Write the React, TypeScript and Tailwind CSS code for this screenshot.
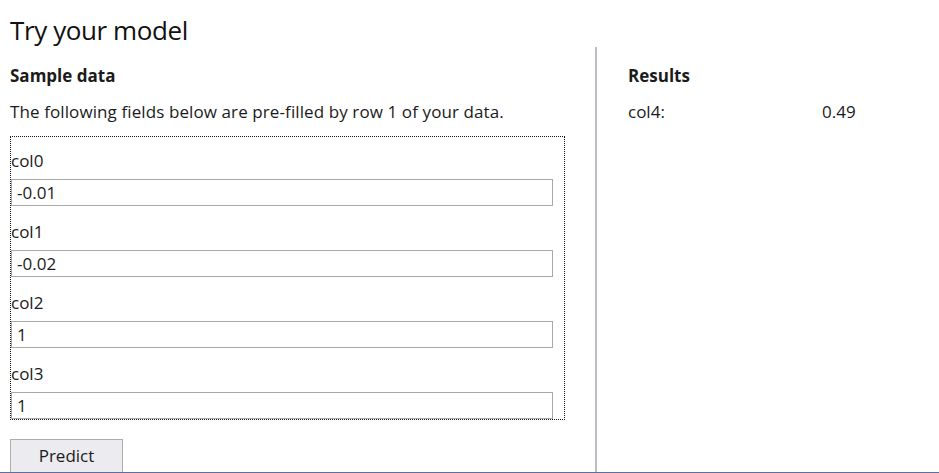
const fields = [
  { name: "col0", value: "-0.01" },
  { name: "col1", value: "-0.02" },
  { name: "col2", value: "1" },
  { name: "col3", value: "1" },
];

export default function App() {
  return (
    <div className="relative h-[473px] w-[939px] overflow-hidden bg-white text-[#1b1b1b] [font-family:'Open_Sans',sans-serif]">
      <h1 className="absolute left-[10px] top-[13px] text-[26px] leading-[34px] tracking-[-0.4px] font-normal text-[#111]">
        Try your model
      </h1>
      <div className="flex pt-[47px] h-[472px]">
        <section className="w-[595px] pl-[10px] pt-[18px] overflow-hidden">
          <h2 className="text-[17px] leading-[22px] font-bold">Sample data</h2>
          <p className="mt-[14px] text-[17px] leading-[22px] tracking-[0.1px]">
            The following fields below are pre-filled by row 1 of your data.
          </p>
          <div className="mt-[13px] w-[555px] border border-dotted border-[#111] pt-[13px]">
            {fields.map((f, i) => (
              <div key={f.name} className={i < fields.length - 1 ? "mb-[15px]" : ""}>
                <label className="block text-[17px] leading-[22px]">{f.name}</label>
                <input
                  readOnly
                  value={f.value}
                  className="mt-[7px] block h-[27px] w-[542px] border border-[#a9a9a9] px-[5px] text-[17px] leading-[22px] text-[#1b1b1b] outline-none"
                />
              </div>
            ))}
          </div>
          <button className="mt-[19px] h-[34px] w-[113px] border border-[#adadad] bg-[#ebebf0] text-[17px] leading-[22px] text-[#1b1b1b]">
            Predict
          </button>
        </section>
        <div className="w-[2px] bg-[#b8bdc6]" />
        <section className="pl-[31px] pt-[18px]">
          <h2 className="text-[17px] leading-[22px] font-bold">Results</h2>
          <div className="mt-[14px] flex text-[17px] leading-[22px]">
            <span className="w-[194px]">col4:</span>
            <span>0.49</span>
          </div>
        </section>
      </div>
      <div className="h-px bg-[#5d6f9c]" />
    </div>
  );
}
